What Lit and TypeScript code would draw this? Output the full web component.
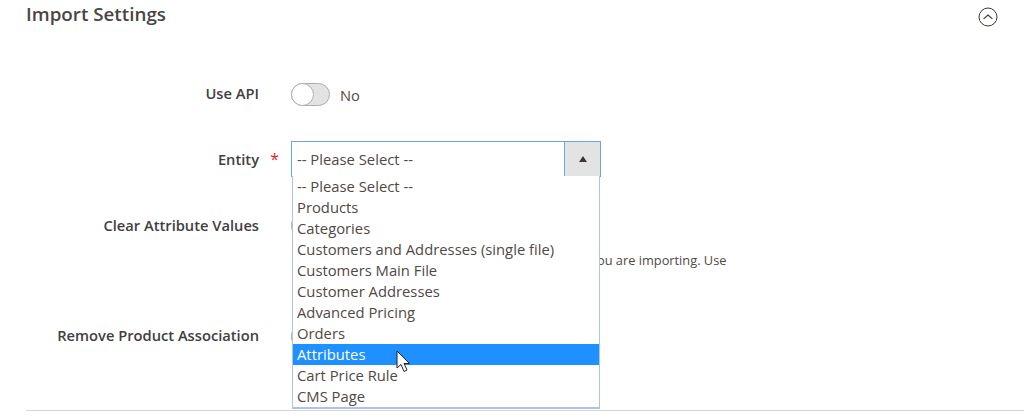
import { LitElement, html, css } from "lit";
import { customElement } from "lit/decorators.js";

const OPTIONS = ["-- Please Select --","Products","Categories","Customers and Addresses (single file)","Customers Main File","Customer Addresses","Advanced Pricing","Orders","Attributes","Cart Price Rule","CMS Page"];

@customElement("app-root")
export class AppRoot extends LitElement {
  static styles = css`
    :host { display: block; height: 418px; overflow: hidden; background: #fff; font-family: "Open Sans", sans-serif; color: #41362f; position: relative; }
    .section { margin: 0 0 0 26px; width: 998px; height: 411px; border-bottom: 1px solid #d6d6d6; box-sizing: border-box; position: relative; }
    .head { display: flex; justify-content: space-between; height: 56px; padding-right: 26px; }
    .title { font-size: 18.8px; font-weight: 600; line-height: 28px; color: #4a4542; }
    .collapse { margin-top: 7px; width: 20px; height: 20px; }
    .row { display: grid; grid-template-columns: 233px 1fr; column-gap: 32px; align-items: center; font-size: 14.7px; }
    .label { text-align: right; font-weight: 600; color: #41403f; position: relative; padding-bottom: 2px; }
    .req { position: absolute; right: -20px; top: -1px; color: #e22626; font-size: 16px; font-weight: 400; }
    .r1 { height: 36px; margin-top: 20px; }
    .r2 { height: 36px; margin-top: 29px; }
    .r2 .label { padding-bottom: 0; }
    .r3 { height: 36px; margin-top: 31px; align-items: start; }
    .r4 { height: 36px; margin-top: 74px; }
    .r3 .label { line-height: 24px; padding-top: 5px; }
    .control { display: flex; align-items: center; gap: 10px; }
    .r3 .control { margin-top: 6px; }
    .toggle { width: 39px; height: 23px; border-radius: 12px; background: #e3e3e3; border: 1px solid #adadad; box-sizing: border-box; position: relative; flex: none; }
    .toggle::before { content: ""; position: absolute; left: -1px; top: -1px; width: 23px; height: 23px; box-sizing: border-box; border-radius: 50%; background: #fff; border: 1px solid #adadad; }
    .off { font-size: 14.7px; color: #514943; padding-top: 1px; }
    .select { display: flex; width: 310px; height: 36px; box-sizing: border-box; border: 1px solid #68a8e0; background: #fff; }
    .value { flex: 1; padding-left: 5px; line-height: 34px; font-size: 14.8px; color: #514943; }
    .arrow { width: 35px; background: #e3e3e3; border-left: 1px solid #68a8e0; display: flex; align-items: center; justify-content: center; }
    .arrow::before { content: ""; border-left: 4.5px solid transparent; border-right: 4.5px solid transparent; border-bottom: 6px solid #41362f; }
    .note { font-size: 12.8px; color: #514943; margin-top: 15px; line-height: 16px; white-space: nowrap; padding-left: 306px; }
    .list { position: absolute; left: 266px; top: 176px; width: 308px; box-sizing: border-box; background: #fff; border: 1px solid #adc4e6; border-top: 0; border-bottom-width: 2px; margin: 0; padding: 0; list-style: none; z-index: 2; }
    .list li { height: 21px; line-height: 21px; font-size: 14.8px; padding-left: 4px; color: #514943; }
    .list li.sel { background: #1e90ff; color: #fff; }
    .pointer { position: absolute; left: 396px; top: 350px; width: 16px; height: 24px; z-index: 3; }
  `;

  render() {
    return html`
      <div class="section">
        <div class="head">
          <div class="title">Import Settings</div>
          <svg class="collapse" viewBox="0 0 20 20" fill="none" stroke="#41362f">
            <circle cx="10" cy="10" r="9" stroke-width="1"></circle>
            <path d="M5.6 11.8 10 8 14.4 11.8" stroke-width="1.1"></path>
          </svg>
        </div>
        <div class="row r1">
          <div class="label">Use API</div>
          <div class="control"><span class="toggle"></span><span class="off">No</span></div>
        </div>
        <div class="row r2">
          <div class="label">Entity<span class="req">*</span></div>
          <div class="select"><span class="value">-- Please Select --</span><span class="arrow"></span></div>
        </div>
        <div class="row r3">
          <div class="label">Clear Attribute Values</div>
          <div>
            <div class="control"><span class="toggle"></span></div>
            <div class="note">ou are importing. Use</div>
          </div>
        </div>
        <div class="row r4">
          <div class="label">Remove Product Association</div>
          <div class="control"><span class="toggle"></span></div>
        </div>
        <ul class="list">
          ${OPTIONS.map((o) => html`<li class=${o === "Attributes" ? "sel" : ""}>${o}</li>`)}
        </ul>
      </div>
      <svg class="pointer" viewBox="0 0 16 24">
        <path d="M1 1 V18 L5 14.5 L8 21.5 L11 20 L8 13.5 H13.5 Z" fill="#fff" stroke="#222" stroke-width="1" stroke-linejoin="round"></path>
      </svg>
    `;
  }
}
